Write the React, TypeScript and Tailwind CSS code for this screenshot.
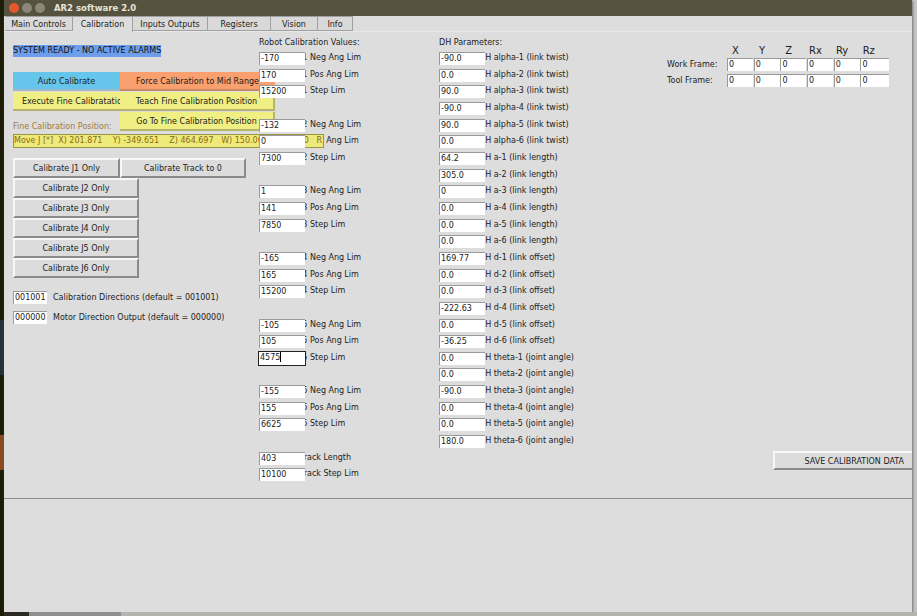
import React from "react";

const font = { fontFamily: '"DejaVu Sans", sans-serif' };

function Field({ value, w = "w-[46px]", focus = false, extra = "" }: { value: string; w?: string; focus?: boolean; extra?: string }) {
  return (
    <div
      className={`relative z-20 h-[13px] shrink-0 bg-white text-[8px] pl-[1px] text-[#222] whitespace-nowrap overflow-hidden ${w} ${extra} ${
        focus ? "outline outline-1 outline-[#222] leading-[12px]" : "border-t border-l border-[#9a9a9a] leading-[11px]"
      }`}
    >
      {value}
      {focus && <span className="inline-block w-[1px] h-[10px] bg-black align-middle" />}
    </div>
  );
}

function TkButton({ label, w, bg = "bg-[#dcdcdc]", extra = "" }: { label: string; w: string; bg?: string; extra?: string }) {
  return (
    <button
      className={`h-[19px] shrink-0 ${w} ${bg} ${extra} text-[8px] text-[#222] text-center whitespace-nowrap overflow-hidden border-t-2 border-l-2 border-b-2 border-r-2 border-t-white/80 border-l-white/80 border-b-[#8a8a8a] border-r-[#8a8a8a] leading-[14px] px-0 pt-[2px]`}
    >
      {label}
    </button>
  );
}

function Row({ value, label, focus = false, labelClass = "" }: { value: string; label: string; focus?: boolean; labelClass?: string }) {
  return (
    <div className="h-[16.67px] flex items-start">
      <Field value={value} focus={focus} />
      <span className={`relative z-0 text-[8px] leading-[11px] text-[#222] whitespace-nowrap ${labelClass}`}>{label}</span>
    </div>
  );
}

const robot: ([string, string] | null)[] = [
  ["-170", "J1 Neg Ang Lim"], ["170", "J1 Pos Ang Lim"], ["15200", "J1 Step Lim"], null,
  ["-132", "J2 Neg Ang Lim"], ["0", "J2 Pos Ang Lim"], ["7300", "J2 Step Lim"], null,
  ["1", "J3 Neg Ang Lim"], ["141", "J3 Pos Ang Lim"], ["7850", "J3 Step Lim"], null,
  ["-165", "J4 Neg Ang Lim"], ["165", "J4 Pos Ang Lim"], ["15200", "J4 Step Lim"], null,
  ["-105", "J5 Neg Ang Lim"], ["105", "J5 Pos Ang Lim"], ["4575", "J5 Step Lim"], null,
  ["-155", "J6 Neg Ang Lim"], ["155", "J6 Pos Ang Lim"], ["6625", "J6 Step Lim"], null,
  ["403", "Track Length"], ["10100", "Track Step Lim"],
];

const dh: [string, string][] = [
  ["-90.0", "DH alpha-1 (link twist)"], ["0.0", "DH alpha-2 (link twist)"], ["90.0", "DH alpha-3 (link twist)"],
  ["-90.0", "DH alpha-4 (link twist)"], ["90.0", "DH alpha-5 (link twist)"], ["0.0", "DH alpha-6 (link twist)"],
  ["64.2", "DH a-1 (link length)"], ["305.0", "DH a-2 (link length)"], ["0", "DH a-3 (link length)"],
  ["0.0", "DH a-4 (link length)"], ["0.0", "DH a-5 (link length)"], ["0.0", "DH a-6 (link length)"],
  ["169.77", "DH d-1 (link offset)"], ["0.0", "DH d-2 (link offset)"], ["0.0", "DH d-3 (link offset)"],
  ["-222.63", "DH d-4 (link offset)"], ["0.0", "DH d-5 (link offset)"], ["-36.25", "DH d-6 (link offset)"],
  ["0.0", "DH theta-1 (joint angle)"], ["0.0", "DH theta-2 (joint angle)"], ["-90.0", "DH theta-3 (joint angle)"],
  ["0.0", "DH theta-4 (joint angle)"], ["0.0", "DH theta-5 (joint angle)"], ["180.0", "DH theta-6 (joint angle)"],
];

const tabs: [string, string, boolean][] = [
  ["Main Controls", "w-[68px]", false],
  ["Calibration", "w-[60px]", true],
  ["Inputs Outputs", "w-[75px]", false],
  ["Registers", "w-[63px]", false],
  ["Vision", "w-[47px]", false],
  ["Info", "w-[35px]", false],
];

export default function App() {
  return (
    <div style={font} className="w-[917px] h-[616px] overflow-hidden bg-[#c4c4c4] flex">
      <div className="w-[4px] h-full shrink-0 bg-[#1d1c06] flex flex-col">
        <div className="h-[320px]" />
        <div className="h-[55px] bg-[#26323a]" />
        <div className="h-[60px]" />
        <div className="h-[35px] bg-[#8a4a20]" />
      </div>
      <div className="flex-1 min-w-0 flex flex-col">
        <div className="w-[908px] h-[612px] shrink-0 bg-[#dddddd] flex flex-col shadow-[1px_1px_2px_#777]">
          {/* Title bar */}
          <div className="h-[16px] bg-[#55533f] flex items-center shrink-0">
            <div className="flex gap-[3px] ml-[5px]">
              <span className="w-[10px] h-[10px] rounded-full bg-[#e2582c]" />
              <span className="w-[10px] h-[10px] rounded-full bg-[#8a887a]" />
              <span className="w-[10px] h-[10px] rounded-full bg-[#8a887a]" />
            </div>
            <span className="ml-[9px] text-[8.5px] font-bold text-[#e6e4da]">AR2 software 2.0</span>
          </div>
          {/* Tabs */}
          <div className="h-[16px] shrink-0 flex pl-[1px] border-b border-[#e8e8e8]">
            {tabs.map(([t, w, active]) => (
              <div
                key={t}
                className={`${w} text-center text-[8px] text-[#222] leading-[15px] border-r border-t border-[#a0a0a0] ${
                  active ? "bg-[#dddddd] h-[16px]" : "bg-[#d9d9d9] h-[15px] border-b"
                }`}
              >
                {t}
              </div>
            ))}
          </div>
          {/* Body */}
          <div className="h-[467px] shrink-0 flex border-b border-[#8f8f8f]">
            {/* Left */}
            <div className="w-[255px] shrink-0 pl-[9px] pt-[13px] flex flex-col">
              <div className="w-[148px] h-[12px] bg-[#6d9eeb] text-[8px] leading-[12px] text-[#111] whitespace-nowrap">SYSTEM READY - NO ACTIVE ALARMS</div>
              <div className="flex mt-[15px]">
                <TkButton label="Auto Calibrate" w="w-[107px]" bg="bg-[#66c5ea]" extra="!border-0 !border-b-2 !border-b-[#9fb8c4]" />
                <TkButton label="Force Calibration to Mid Range" w="w-[155px]" bg="bg-[#f9a06e]" extra="!border-0 !border-b-2 !border-b-[#c98a63]" />
              </div>
              <div className="flex mt-[1px]">
                <TkButton label="Execute Fine Calibratation" w="w-[107px]" bg="bg-[#f0ef84]" extra="!border-l-0 !border-t-0 !border-r-0 !border-b-[#b5b46a] !text-left !pl-[9px]" />
                <TkButton label="Teach Fine Calibration Position" w="w-[155px]" bg="bg-[#f0ef84]" extra="!border-l-0 !border-t-0 !border-r-2 !border-r-[#b5b46a] !border-b-[#b5b46a]" />
              </div>
              <div className="flex mt-[1px] h-[19px]">
                <div className="w-[107px] shrink-0 pt-[9px] text-[8px] leading-[11px] text-[#a07a3a] whitespace-nowrap">Fine Calibration Position:</div>
                <TkButton label="Go To Fine Calibration Position" w="w-[155px]" bg="bg-[#f0ef84]" extra="!border-l-0 !border-t-0 !border-r-2 !border-r-[#b5b46a] !border-b-[#b5b46a]" />
              </div>
              <div className="relative z-10 mt-[3px] w-[311px] h-[14px] bg-[#eeea7a] border border-[#9a9648] text-[8px] leading-[12px] text-[#8a6a10] whitespace-pre overflow-hidden shrink-0">
                {"Move J [*]  X) 201.871    Y) -349.651    Z) 464.697   W) 150.000   P) 0.000   R) 0.000"}
              </div>
              <div className="flex mt-[10px]">
                <TkButton label="Calibrate J1 Only" w="w-[107px]" extra="!h-[20px]" />
                <TkButton label="Calibrate Track to 0" w="w-[126px]" extra="!h-[20px]" />
              </div>
              {["J2", "J3", "J4", "J5", "J6"].map((j) => (
                <TkButton key={j} label={`Calibrate ${j} Only`} w="w-[126px]" extra="!h-[20px]" />
              ))}
              <div className="flex items-center mt-[13px] h-[13px]">
                <Field value="001001" w="w-[34px]" />
                <span className="ml-[6px] text-[8px] text-[#222] whitespace-nowrap">Calibration Directions (default = 001001)</span>
              </div>
              <div className="flex items-center mt-[7px] h-[13px]">
                <Field value="000000" w="w-[34px]" />
                <span className="ml-[6px] text-[8px] text-[#222] whitespace-nowrap">Motor Direction Output (default = 000000)</span>
              </div>
            </div>
            {/* Robot calibration */}
            <div className="w-[180px] shrink-0 pt-[5px]">
              <div className="h-[15px] text-[8px] leading-[11px] text-[#222]">Robot Calibration Values:</div>
              {robot.map((r, i) =>
                r ? (
                  <Row key={i} value={r[0]} label={r[1]} focus={r[1] === "J5 Step Lim"} labelClass="-ml-[5px]" />
                ) : (
                  <div key={i} className="h-[16.67px]" />
                )
              )}
            </div>
            {/* DH */}
            <div className="w-[228px] shrink-0 pt-[5px]">
              <div className="h-[15px] text-[8px] leading-[11px] text-[#222]">DH Parameters:</div>
              {dh.map(([v, l]) => (
                <Row key={l} value={v} label={l} labelClass="-ml-[6px]" />
              ))}
            </div>
            {/* Frames + save */}
            <div className="flex-1 min-w-0 flex flex-col pt-[12px]">
              <div className="grid grid-cols-[60px_repeat(6,26.7px)] text-[8px] text-[#222] items-start">
                <span />
                {["X", "Y", "Z", "Rx", "Ry", "Rz"].map((h) => (
                  <span key={h} className="text-[10px] leading-[13px] text-center pr-[10px] whitespace-nowrap">{h}</span>
                ))}
                <span className="h-[16px] leading-[15px]">Work Frame:</span>
                {[0, 1, 2, 3, 4, 5].map((k) => (
                  <Field key={k} value="0" w={k === 5 ? "w-[29px]" : "w-[26px]"} extra="mt-[1px]" />
                ))}
                <span className="h-[16px] leading-[15px]">Tool Frame:</span>
                {[0, 1, 2, 3, 4, 5].map((k) => (
                  <Field key={k} value="0" w={k === 5 ? "w-[29px]" : "w-[26px]"} extra="mt-[1px]" />
                ))}
              </div>
              <div className="mt-[358px] ml-[106px]">
                <TkButton label="SAVE CALIBRATION DATA" w="w-[139px]" extra="!text-right !pr-[8px] !border-r-0" />
              </div>
            </div>
          </div>
        </div>
        {/* Desktop strip under the window */}
        <div className="flex-1 flex">
          <div className="w-[25px] bg-[#2a2a20]" />
          <div className="w-[92px] bg-[#8f8f8f]" />
          <div className="flex-1 bg-[#b4b4b0]" />
        </div>
      </div>
    </div>
  );
}
